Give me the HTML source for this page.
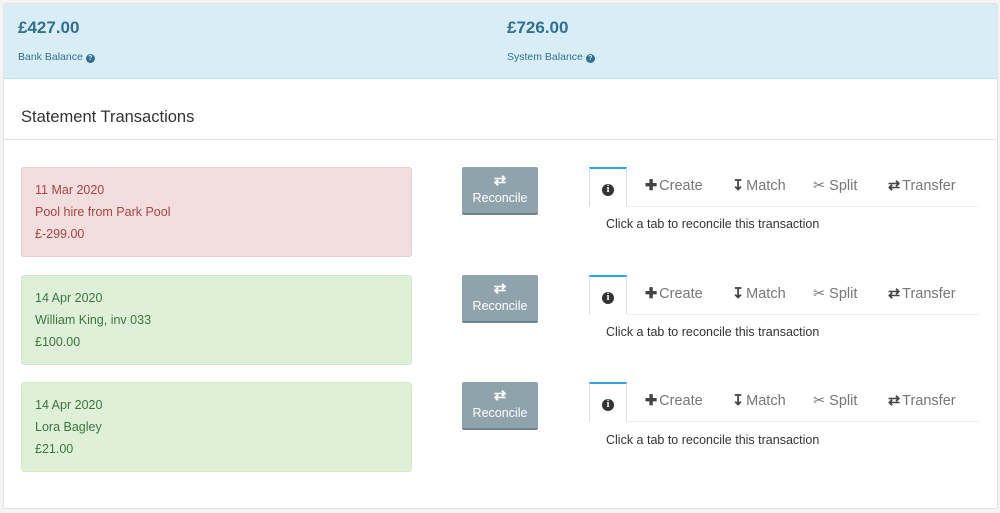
<!DOCTYPE html><html><head><style>
body{margin:0;background:#f4f4f4;font-family:"Liberation Sans",sans-serif;width:1000px;height:513px;overflow:hidden;position:relative}
.panel{position:absolute;left:3px;top:3px;width:993px;height:504px;background:#fff;border:1px solid #e3e3e3;border-radius:3px}
.hdr{position:absolute;left:0;top:0;width:993px;height:74px;background:#d9edf7;border-bottom:1px solid #bce8f1}
.amt{position:absolute;top:14px;font-size:17px;font-weight:bold;color:#31708f}
.lbl{position:absolute;top:47px;font-size:10.5px;color:#31708f}
.q{display:inline-block;width:9px;height:9px;border-radius:50%;background:#31708f;color:#d9edf7;font-size:7px;font-weight:bold;text-align:center;line-height:9px;vertical-align:0}
.title{position:absolute;left:17px;top:104px;font-size:16.5px;color:#333}
.sep{position:absolute;left:0;top:135px;width:993px;height:1px;background:#e5e5e5}
.card{position:absolute;left:17px;width:391px;height:90px;border:1px solid;border-radius:3px;font-size:12.5px;line-height:22px;padding:11px 13px;box-sizing:border-box}
.red{background:#f2dede;border-color:#ebccd1;color:#a94442}
.grn{background:#dff0d8;border-color:#d6e9c6;color:#3c763d}
.btn{position:absolute;left:458px;width:76px;height:48px;background:#8fa3ad;border-bottom:2px solid #6f838d;border-radius:2px;color:#fff;font-size:12.5px;text-align:center;box-sizing:border-box;padding-top:5px;line-height:17px}
.btn .ar{font-size:15px;font-weight:bold}
.tabs{position:absolute;left:585px;width:390px;height:39px;border-bottom:1px solid #eee}
.tab{position:absolute;top:0;height:39px;line-height:38px;font-size:14.5px;color:#777}
.act{left:0;width:38px;border:1px solid #ddd;border-top:2px solid #29a8e0;border-bottom:1px solid #fff;box-sizing:border-box;background:#fff;text-align:center;height:40px}
.i{display:inline-block;width:12px;height:12px;border-radius:50%;background:#333;color:#fff;font-size:10px;font-weight:bold;line-height:12px;text-align:center;font-family:"Liberation Serif",serif}
.msg{position:absolute;left:602px;font-size:12.5px;color:#333}
b.ic{color:#444;font-weight:bold;margin-right:2px}
</style></head><body><div class="panel">
<div class="hdr">
<div class="amt" style="left:14px">£427.00</div><div class="lbl" style="left:14px">Bank Balance <span class="q">?</span></div>
<div class="amt" style="left:503px">£726.00</div><div class="lbl" style="left:503px">System Balance <span class="q">?</span></div>
</div>
<div class="title">Statement Transactions</div><div class="sep"></div>

<div class="card red" style="top:163px">11 Mar 2020<br>Pool hire from Park Pool<br>£-299.00</div>
<div class="btn" style="top:163px"><span class="ar">⇄</span><br>Reconcile</div>
<div class="tabs" style="top:163px"><div class="tab act"><span class="i">i</span></div><div class="tab" style="left:56px"><b class="ic">✚</b>Create</div><div class="tab" style="left:143px"><b class="ic">↧</b>Match</div><div class="tab" style="left:224px">✂ Split</div><div class="tab" style="left:299px"><b class="ic">⇄</b>Transfer</div></div>
<div class="msg" style="top:213px">Click a tab to reconcile this transaction</div>

<div class="card grn" style="top:271px">14 Apr 2020<br>William King, inv 033<br>£100.00</div>
<div class="btn" style="top:271px"><span class="ar">⇄</span><br>Reconcile</div>
<div class="tabs" style="top:271px"><div class="tab act"><span class="i">i</span></div><div class="tab" style="left:56px"><b class="ic">✚</b>Create</div><div class="tab" style="left:143px"><b class="ic">↧</b>Match</div><div class="tab" style="left:224px">✂ Split</div><div class="tab" style="left:299px"><b class="ic">⇄</b>Transfer</div></div>
<div class="msg" style="top:321px">Click a tab to reconcile this transaction</div>

<div class="card grn" style="top:378px">14 Apr 2020<br>Lora Bagley<br>£21.00</div>
<div class="btn" style="top:378px"><span class="ar">⇄</span><br>Reconcile</div>
<div class="tabs" style="top:378px"><div class="tab act"><span class="i">i</span></div><div class="tab" style="left:56px"><b class="ic">✚</b>Create</div><div class="tab" style="left:143px"><b class="ic">↧</b>Match</div><div class="tab" style="left:224px">✂ Split</div><div class="tab" style="left:299px"><b class="ic">⇄</b>Transfer</div></div>
<div class="msg" style="top:429px">Click a tab to reconcile this transaction</div>
</div></body></html>
